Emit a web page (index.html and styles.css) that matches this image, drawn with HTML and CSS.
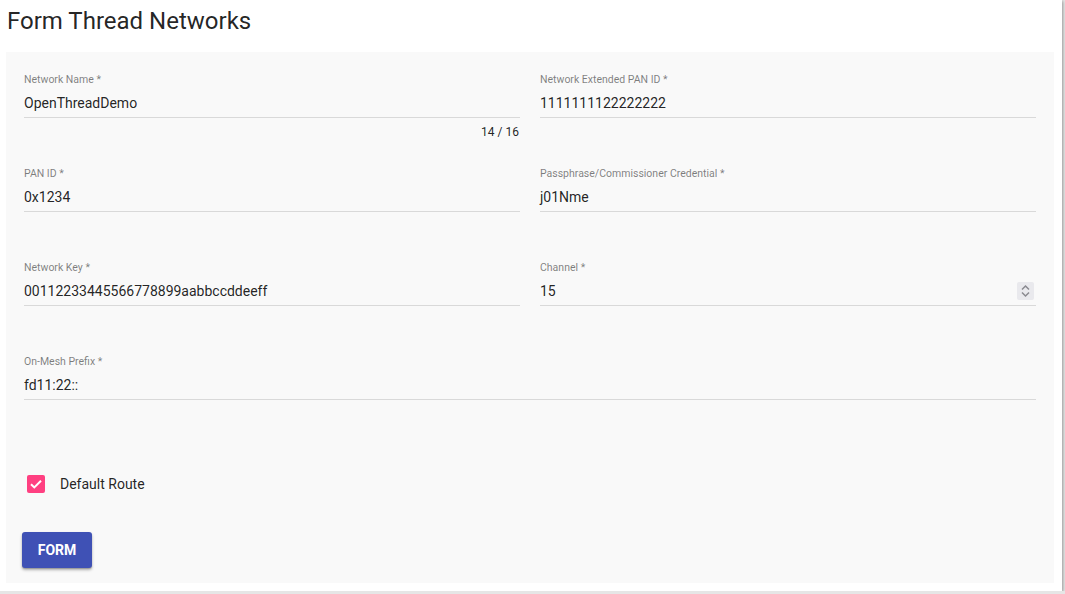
FILE: index.html
```html
<!DOCTYPE html>
<html>
<head>
<meta charset="utf-8">
<link rel="stylesheet" href="styles.css">
</head>
<body>
<div class="card">
  <h1 class="title">Form Thread Networks</h1>
  <div class="panel">
    <div class="grid">
      <div class="field">
        <div class="label">Network Name <span class="req">*</span></div>
        <div class="input-row"><span class="value">OpenThreadDemo</span></div>
        <div class="hint">14 / 16</div>
      </div>
      <div class="field">
        <div class="label">Network Extended PAN ID <span class="req">*</span></div>
        <div class="input-row"><span class="value">1111111122222222</span></div>
      </div>
      <div class="field">
        <div class="label">PAN ID <span class="req">*</span></div>
        <div class="input-row"><span class="value">0x1234</span></div>
      </div>
      <div class="field">
        <div class="label">Passphrase/Commissioner Credential <span class="req">*</span></div>
        <div class="input-row"><span class="value">j01Nme</span></div>
      </div>
      <div class="field">
        <div class="label">Network Key <span class="req">*</span></div>
        <div class="input-row"><span class="value">00112233445566778899aabbccddeeff</span></div>
      </div>
      <div class="field">
        <div class="label">Channel <span class="req">*</span></div>
        <div class="input-row"><span class="value">15</span>
          <span class="spinner"><svg width="17" height="18" viewBox="0 0 17 18"><path d="M5 7.5 L8.5 4 L12 7.5" fill="none" stroke="#8a8a90" stroke-width="1.5"/><path d="M5 10.5 L8.5 14 L12 10.5" fill="none" stroke="#8a8a90" stroke-width="1.5"/></svg></span>
        </div>
      </div>
      <div class="field wide">
        <div class="label">On-Mesh Prefix <span class="req">*</span></div>
        <div class="input-row"><span class="value">fd11:22::</span></div>
      </div>
    </div>
    <div class="check-row">
      <span class="checkbox"><svg width="18" height="18" viewBox="0 0 18 18"><path d="M4 9.2 L7.3 12.4 L14 5.8" fill="none" stroke="#fff" stroke-width="2"/></svg></span>
      <span class="check-label">Default Route</span>
    </div>
    <button class="btn">FORM</button>
  </div>
</div>
</body>
</html>
```

FILE: styles.css
```css
html, body {
  margin: 0;
  padding: 0;
  background: #e6e6e6;
  font-family: Roboto, "Liberation Sans", sans-serif;
}
.card {
  width: 1062px;
  height: 591px;
  background: #fff;
  box-shadow: 1px 1px 3px rgba(0,0,0,0.35);
  box-sizing: border-box;
  padding: 0 8px 0 6px;
  overflow: hidden;
}
.title {
  margin: 0;
  padding: 7px 0 0 1px;
  height: 52px;
  box-sizing: border-box;
  font-size: 24px;
  font-weight: 400;
  line-height: 28px;
  color: rgba(0,0,0,0.87);
}
.panel {
  background: #f9f9f9;
  height: 531px;
  box-sizing: border-box;
  padding: 22px 18px 0 18px;
}
.grid {
  display: grid;
  grid-template-columns: 496px 496px;
  column-gap: 20px;
}
.field {
  height: 94px;
  display: flex;
  flex-direction: column;
}
.field.wide {
  grid-column: 1 / 3;
}
.label {
  font-size: 10.5px;
  line-height: 12px;
  height: 12px;
  color: rgba(0,0,0,0.5);
}
.req {
  color: rgba(0,0,0,0.5);
}
.input-row {
  display: flex;
  align-items: center;
  margin-top: 7px;
  height: 20px;
  padding-bottom: 4px;
  border-bottom: 1px solid #d9d9d9;
}
.value {
  flex: 1;
  font-size: 14px;
  line-height: 20px;
  color: rgba(0,0,0,0.87);
}
.spinner {
  width: 17px;
  height: 18px;
  background: #e9e9ed;
  border-radius: 2px;
  margin-right: 2px;
  display: flex;
}
.hint {
  margin-top: 7px;
  text-align: right;
  padding-right: 1px;
  font-size: 12px;
  line-height: 14px;
  color: rgba(0,0,0,0.87);
}
.check-row {
  display: flex;
  align-items: center;
  margin-top: 25px;
  padding-left: 3px;
  height: 18px;
}
.checkbox {
  width: 18px;
  height: 18px;
  background: #ff4081;
  border-radius: 2px;
  display: flex;
}
.check-label {
  margin-left: 15px;
  font-size: 14px;
  color: rgba(0,0,0,0.87);
}
.btn {
  display: block;
  margin-top: 39px;
  margin-left: -2px;
  width: 70px;
  height: 36px;
  border: 0;
  border-radius: 3px;
  background: #3f51b5;
  color: #fff;
  font-family: Roboto, "Liberation Sans", sans-serif;
  font-size: 14px;
  font-weight: 700;
  box-shadow: 0 2px 3px rgba(0,0,0,0.3), 0 1px 1px rgba(0,0,0,0.15);
  padding: 0;
}
```
